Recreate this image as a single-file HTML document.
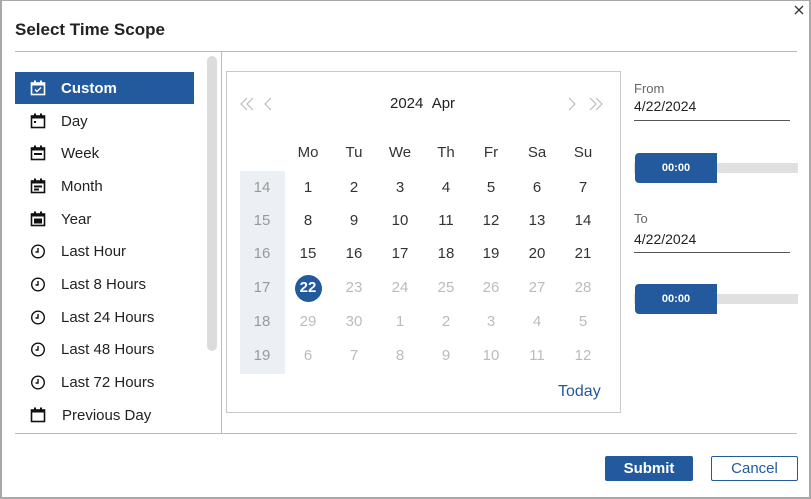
<!DOCTYPE html>
<html><head><style>
*{margin:0;padding:0;box-sizing:border-box}
body{width:811px;height:499px;background:#fff;font-family:"Liberation Sans",sans-serif;position:relative;overflow:hidden;color:#222}
.abs{position:absolute}
.frame{left:0;top:0;width:811px;height:499px;border:2px solid #a8a8a8;border-top-width:1px}
.item{position:absolute;left:15px;width:179px;height:32px;font-size:15px;line-height:34px}
.item span{position:absolute;left:46px}
.item svg{position:absolute;left:15px;top:8px}
.c{position:absolute;width:40px;text-align:center;font-size:15px;line-height:20px;color:#333}
.g{color:#bbb !important}
.w{color:#999 !important}
</style></head><body>
<div class="abs frame"></div>
<div class="abs" style="left:15px;top:20px;font-size:17px;font-weight:bold;color:#222">Select Time Scope</div>
<svg class="abs" style="left:794px;top:5px" width="10" height="10" viewBox="0 0 10 10"><path d="M1 1l8 8M9 1l-8 8" stroke="#333" stroke-width="1.3"/></svg>
<div class="abs" style="left:15px;top:51px;width:782px;height:1px;background:#bbb"></div>
<div class="abs" style="left:221px;top:52px;width:1px;height:382px;background:#bbb"></div>
<div class="abs" style="left:15px;top:433px;width:782px;height:1px;background:#bbb"></div>
<div class="abs" style="left:207px;top:56px;width:10px;height:295px;background:#dcdcdc;border-radius:5px"></div>

<div class="item" style="top:72px;background:#235a9e;color:#fff;font-weight:bold"><svg width="16" height="16" viewBox="0 0 16 16"><rect x="1.5" y="3" width="13" height="11.5" fill="none" stroke="#fff" stroke-width="1.6"/><rect x="1.5" y="2.5" width="13" height="3" fill="#fff"/><rect x="4" y="0.5" width="2" height="3" fill="#fff"/><rect x="10" y="0.5" width="2" height="3" fill="#fff"/><path d="M5 9.5l2 2 4-4" stroke="#fff" stroke-width="1.4" fill="none"/></svg><span>Custom</span></div>
<div class="item" style="top:105px"><svg width="16" height="16" viewBox="0 0 16 16"><rect x="1.5" y="3" width="13" height="11.5" fill="none" stroke="#111" stroke-width="1.6"/><rect x="1.5" y="2.5" width="13" height="3" fill="#111"/><rect x="4" y="0.5" width="2" height="3" fill="#111"/><rect x="10" y="0.5" width="2" height="3" fill="#111"/><rect x="4" y="8" width="2" height="2" fill="#111"/></svg><span>Day</span></div>
<div class="item" style="top:137px"><svg width="16" height="16" viewBox="0 0 16 16"><rect x="1.5" y="3" width="13" height="11.5" fill="none" stroke="#111" stroke-width="1.6"/><rect x="1.5" y="2.5" width="13" height="3" fill="#111"/><rect x="4" y="0.5" width="2" height="3" fill="#111"/><rect x="10" y="0.5" width="2" height="3" fill="#111"/><rect x="4" y="8" width="8" height="2" fill="#111"/></svg><span>Week</span></div>
<div class="item" style="top:170px"><svg width="16" height="16" viewBox="0 0 16 16"><rect x="1.5" y="3" width="13" height="11.5" fill="none" stroke="#111" stroke-width="1.6"/><rect x="1.5" y="2.5" width="13" height="3" fill="#111"/><rect x="4" y="0.5" width="2" height="3" fill="#111"/><rect x="10" y="0.5" width="2" height="3" fill="#111"/><rect x="4" y="7.5" width="8" height="2" fill="#111"/><rect x="4" y="10.5" width="5" height="2" fill="#111"/></svg><span>Month</span></div>
<div class="item" style="top:203px"><svg width="16" height="16" viewBox="0 0 16 16"><rect x="1.5" y="3" width="13" height="11.5" fill="none" stroke="#111" stroke-width="1.6"/><rect x="1.5" y="2.5" width="13" height="3" fill="#111"/><rect x="4" y="0.5" width="2" height="3" fill="#111"/><rect x="10" y="0.5" width="2" height="3" fill="#111"/><rect x="4" y="7.5" width="8" height="5" fill="#111"/></svg><span>Year</span></div>
<div class="item" style="top:235px"><svg width="16" height="16" viewBox="0 0 16 16"><circle cx="8" cy="8.5" r="6.3" fill="none" stroke="#111" stroke-width="1.4"/><path d="M8 5v4H5.5" stroke="#111" stroke-width="1.4" fill="none"/></svg><span>Last Hour</span></div>
<div class="item" style="top:268px"><svg width="16" height="16" viewBox="0 0 16 16"><circle cx="8" cy="8.5" r="6.3" fill="none" stroke="#111" stroke-width="1.4"/><path d="M8 5v4H5.5" stroke="#111" stroke-width="1.4" fill="none"/></svg><span>Last 8 Hours</span></div>
<div class="item" style="top:301px"><svg width="16" height="16" viewBox="0 0 16 16"><circle cx="8" cy="8.5" r="6.3" fill="none" stroke="#111" stroke-width="1.4"/><path d="M8 5v4H5.5" stroke="#111" stroke-width="1.4" fill="none"/></svg><span>Last 24 Hours</span></div>
<div class="item" style="top:333px"><svg width="16" height="16" viewBox="0 0 16 16"><circle cx="8" cy="8.5" r="6.3" fill="none" stroke="#111" stroke-width="1.4"/><path d="M8 5v4H5.5" stroke="#111" stroke-width="1.4" fill="none"/></svg><span>Last 48 Hours</span></div>
<div class="item" style="top:366px"><svg width="16" height="16" viewBox="0 0 16 16"><circle cx="8" cy="8.5" r="6.3" fill="none" stroke="#111" stroke-width="1.4"/><path d="M8 5v4H5.5" stroke="#111" stroke-width="1.4" fill="none"/></svg><span>Last 72 Hours</span></div>
<div class="item" style="top:399px"><svg width="16" height="16" viewBox="0 0 16 16"><rect x="1.5" y="3" width="13" height="11.5" fill="none" stroke="#111" stroke-width="1.6"/><rect x="1.5" y="2.5" width="13" height="3" fill="#111"/><rect x="4" y="0.5" width="2" height="3" fill="#111"/><rect x="10" y="0.5" width="2" height="3" fill="#111"/></svg><span style="left:47px">Previous Day</span></div>

<div class="abs" style="left:226px;top:71px;width:395px;height:342px;border:1px solid #c8c8c8"></div>
<div class="abs" style="left:240px;top:171px;width:45px;height:203px;background:#ecf0f4"></div>
<svg class="abs" style="left:240px;top:97px" width="40" height="14" viewBox="0 0 40 14"><path d="M7 1l-6 6 6 6M13 1l-6 6 6 6M31 1l-6 6 6 6" stroke="#bbb" stroke-width="1.2" fill="none"/></svg>
<svg class="abs" style="left:567px;top:97px" width="40" height="14" viewBox="0 0 40 14"><path d="M2 1l6 6-6 6M23 1l6 6-6 6M29 1l6 6-6 6" stroke="#bbb" stroke-width="1.2" fill="none"/></svg>
<div class="abs" style="left:390px;top:95px;font-size:15px;color:#222">2024&nbsp;&nbsp;Apr</div>
<div class="abs" style="left:295px;top:275px;width:27px;height:27px;border-radius:50%;background:#235a9e"></div>
<div id="cal"></div>
<div class="abs" style="left:558px;top:383px;font-size:16px;color:#235a9e">Today</div>

<div class="abs" style="left:634px;top:81px;font-size:13px;color:#666">From</div>
<div class="abs" style="left:634px;top:98px;font-size:14px;color:#222">4/22/2024</div>
<div class="abs" style="left:634px;top:120px;width:156px;height:1px;background:#555"></div>
<div class="abs" style="left:634px;top:163px;width:164px;height:10px;background:#e0e0e0"></div>
<div class="abs" style="left:635px;top:153px;width:82px;height:30px;background:#235a9e;border-radius:4px 0 0 4px;color:#fff;font-size:11px;font-weight:bold;text-align:center;line-height:30px">00:00</div>
<div class="abs" style="left:634px;top:211px;font-size:13px;color:#666">To</div>
<div class="abs" style="left:634px;top:231px;font-size:14px;color:#222">4/22/2024</div>
<div class="abs" style="left:634px;top:252px;width:156px;height:1px;background:#555"></div>
<div class="abs" style="left:634px;top:294px;width:164px;height:10px;background:#e0e0e0"></div>
<div class="abs" style="left:635px;top:284px;width:82px;height:30px;background:#235a9e;border-radius:4px 0 0 4px;color:#fff;font-size:11px;font-weight:bold;text-align:center;line-height:30px">00:00</div>

<div class="abs" style="left:605px;top:456px;width:88px;height:25px;background:#235a9e;border-radius:2px;color:#fff;font-weight:bold;font-size:15px;text-align:center;line-height:25px">Submit</div>
<div class="abs" style="left:711px;top:456px;width:87px;height:25px;border:1px solid #235a9e;border-radius:2px;color:#235a9e;font-size:15px;text-align:center;line-height:23px">Cancel</div>

<script>
var xs=[262,308,354,400,446,491,537,583],ys=[188,221,254,288,322,356];
var h='',hd=['','Mo','Tu','We','Th','Fr','Sa','Su'];
for(var i=1;i<8;i++)h+='<div class="c" style="left:'+(xs[i]-20)+'px;top:143px">'+hd[i]+'</div>';
var n=1;
for(var r=0;r<6;r++){
 h+='<div class="c w" style="left:'+(xs[0]-20)+'px;top:'+(ys[r]-10)+'px">'+(14+r)+'</div>';
 for(var c=1;c<8;c++){
  var d=n<=30?n:n-30,cls='';
  if(n>22)cls='g';
  var st=n==22?';color:#fff;font-weight:bold':'';
  h+='<div class="c '+cls+'" style="left:'+(xs[c]-20)+'px;top:'+(ys[r]-10)+'px'+st+'">'+d+'</div>';
  n++;
 }
}
document.getElementById('cal').innerHTML=h;
</script>
</body></html>
